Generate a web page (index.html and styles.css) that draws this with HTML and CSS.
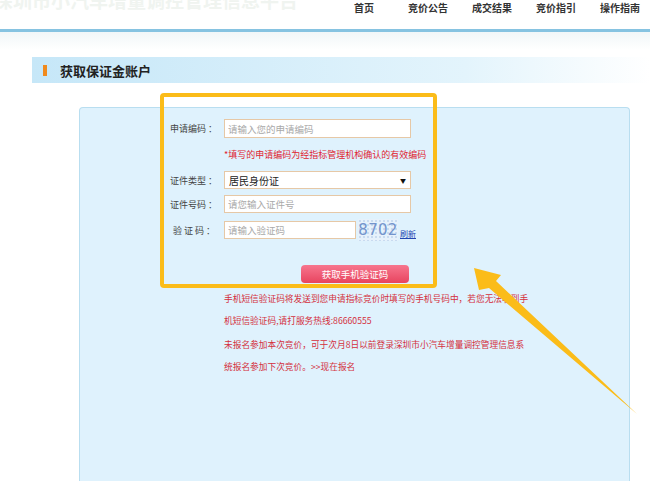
FILE: index.html
```html
<!DOCTYPE html>
<html lang="zh-CN">
<head>
  <meta charset="UTF-8">
  <meta name="viewport" content="width=device-width, initial-scale=1.0">
  <title>获取保证金账户</title>
  <link rel="stylesheet" href="styles.css">
</head>
<body>
  <header class="topbar">
    <div class="site-name">深圳市小汽车增量调控管理信息平台</div>
    <nav class="nav">
      <a href="#">首页</a>
      <a href="#">竞价公告</a>
      <a href="#">成交结果</a>
      <a href="#">竞价指引</a>
      <a href="#">操作指南</a>
    </nav>
  </header>

  <main class="main">
    <h2 class="section-title"><span class="mark"></span>获取保证金账户</h2>

    <div class="panel">
      <form class="form">
        <div class="row">
          <label>申请编码 ：</label>
          <input class="field" type="text" placeholder="请输入您的申请编码">
        </div>
        <p class="note">*填写的申请编码为经指标管理机构确认的有效编码</p>
        <div class="row">
          <label>证件类型 ：</label>
          <div class="field select">居民身份证<span class="caret">&#9660;</span></div>
        </div>
        <div class="row">
          <label>证件号码 ：</label>
          <input class="field" type="text" placeholder="请您输入证件号">
        </div>
        <div class="row">
          <label class="spaced">验 证 码 ：</label>
          <input class="field short" type="text" placeholder="请输入验证码">
          <span class="captcha">8702</span>
          <a class="refresh" href="#">刷新</a>
        </div>
        <div class="actions">
          <button type="button" class="btn">获取手机验证码</button>
        </div>
        <div class="tips">
          <p>手机短信验证码将发送到您申请指标竞价时填写的手机号码中，若您无法收到手<br>机短信验证码,请打服务热线:86660555</p>
          <p>未报名参加本次竞价，可于次月8日以前登录深圳市小汽车增量调控管理信息系<br>统报名参加下次竞价。&gt;&gt;现在报名</p>
        </div>
      </form>
    </div>
  </main>

  <!-- annotation overlay -->
  <div class="highlight"></div>
  <svg class="arrow" width="650" height="481" viewBox="0 0 650 481">
    <polygon points="474,268 501,275 496,281 637,414 489,288 479,290" fill="#fbbc19"/>
  </svg>
</body>
</html>
```

FILE: styles.css
```css
html,
body {
  overflow: hidden;
}

body {
  margin: 0;
  padding: 0;
  width: 650px;
  height: 481px;
  position: relative;
  background: #fff;
  font-family: "Noto Sans CJK SC", "Liberation Sans", sans-serif;
  color: #333;
}

.topbar {
  height: 29px;
  border-bottom: 3px solid #86c3e1;
  display: flex;
  justify-content: space-between;
  overflow: hidden;
}

.site-name {
  margin: -13px 0 0 -6px;
  font-size: 19px;
  font-weight: bold;
  line-height: 26px;
  color: #f0f4f0;
  white-space: nowrap;
}

.nav {
  display: flex;
  margin-right: -2px;
}

.nav a {
  width: 64px;
  text-align: center;
  font-size: 10px;
  font-weight: bold;
  line-height: 16px;
  color: #333;
  text-decoration: none;
}

.main {
  padding-top: 25px;
  background: linear-gradient(#f1f6f8, #fff 18px);
}

.section-title {
  margin: 0 0 0 32px;
  height: 26px;
  display: flex;
  align-items: center;
  padding-left: 11px;
  font-size: 13px;
  font-weight: bold;
  color: #222;
  background: linear-gradient(to right, #c6e7f8, #e3f4fc 70%, #fff);
}

.mark {
  width: 4px;
  height: 11px;
  margin-right: 13px;
  background: #f08a1c;
}

.panel {
  margin: 24px 0 0 79px;
  width: 549px;
  height: 373px;
  background: #dff2fd;
  border: 1px solid #b9def0;
  border-bottom: none;
  border-radius: 4px 4px 0 0;
}

.form {
  padding: 11px 0 0 90px;
}

.row {
  display: flex;
  align-items: center;
  margin-bottom: 6px;
}

.row label {
  width: 52px;
  margin-right: 2px;
  font-size: 9px;
  color: #444;
  white-space: nowrap;
}

.row label.spaced {
  padding-left: 3px;
  width: 49px;
}

.field {
  box-sizing: border-box;
  width: 187px;
  height: 18px;
  margin: 0;
  padding: 0 3px;
  border: 1px solid #e6c8a6;
  background: #fff;
  font-family: inherit;
  font-size: 9.5px;
  color: #222;
  outline: none;
}

.row:first-child .field {
  height: 19px;
}

.field::placeholder {
  color: #a9a9a9;
}

.select {
  display: flex;
  align-items: center;
  justify-content: space-between;
  padding: 0 4px;
  font-size: 10px;
}

.caret {
  font-size: 6px;
  color: #111;
}

.field.short {
  width: 132px;
}

.captcha {
  width: 40px;
  height: 22px;
  margin-left: 2px;
  line-height: 22px;
  text-align: center;
  font-family: "DejaVu Sans", sans-serif;
  font-size: 15px;
  font-weight: normal;
  letter-spacing: 0.3px;
  color: #7394cc;
  background:
    radial-gradient(circle, #c8dbf0 0.8px, transparent 1px) 0 0 / 4px 4px,
    #e6f1fb;
}

.refresh {
  margin: 6px 0 0 2px;
  font-size: 8px;
  color: #2346b0;
}

.note {
  margin: 0;
  padding: 8px 0 8px 54px;
  line-height: 17px;
  font-size: 9px;
  color: #e0242f;
}

.row + .note {
  margin-top: -6px;
}

.actions {
  margin: 18px 0 0 131px;
}

.btn {
  width: 108px;
  height: 18px;
  padding: 0;
  border: none;
  border-radius: 4px;
  background: linear-gradient(#f7768e, #e8445f);
  color: #fff;
  font-family: inherit;
  font-size: 9.5px;
}

.tips {
  margin: 5px 0 0 54px;
}

.tips p {
  margin: 0 0 2px;
  line-height: 22px;
  font-size: 8.7px;
  color: #d42f3c;
  white-space: nowrap;
}

.highlight {
  position: absolute;
  left: 160px;
  top: 93px;
  width: 277px;
  height: 195px;
  box-sizing: border-box;
  border: 4px solid #fbbc19;
  border-radius: 4px;
}

.arrow {
  position: absolute;
  left: 0;
  top: 0;
  pointer-events: none;
}
```
